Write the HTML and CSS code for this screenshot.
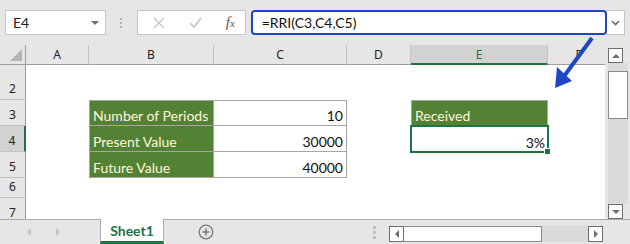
FILE: index.html
```html
<!DOCTYPE html>
<html>
  <head>
    <title>RRI</title>
    <link rel="stylesheet" href="styles.css">
  </head>
  <body>
    <div class="excel">
      <div class="formula-bar">
        <div class="name-box">
          <span>E4</span>
          <span class="caret"></span>
        </div>
        <div class="grip"><i></i><i></i><i></i></div>
        <div class="fx-box">
          <svg width="12" height="12" viewBox="0 0 12 12"><path d="M1 1L11 11M11 1L1 11" stroke="#c3c3c3" stroke-width="1.4" fill="none"/></svg>
          <svg width="13" height="11" viewBox="0 0 13 11"><path d="M1 6L5 10L12 1" stroke="#c3c3c3" stroke-width="1.6" fill="none"/></svg>
          <span class="fx">f<small>x</small></span>
        </div>
        <div class="formula-input">=RRI(C3,C4,C5)</div>
        <div class="expand">
          <svg width="9" height="6" viewBox="0 0 9 6"><path d="M1 1L4.5 4.5L8 1" stroke="#6a6a6a" stroke-width="1.6" fill="none"/></svg>
        </div>
      </div>

      <div class="sheet">
        <div class="grid">
          <div class="corner"><span class="tri"></span></div>
          <div class="col-head">A</div>
          <div class="col-head">B</div>
          <div class="col-head">C</div>
          <div class="col-head">D</div>
          <div class="col-head active">E</div>
          <div class="col-head">F</div>

          <div class="row-head">2</div>
          <div class="cell"></div><div class="cell"></div><div class="cell"></div><div class="cell"></div><div class="cell"></div><div class="cell"></div>

          <div class="row-head">3</div>
          <div class="cell"></div>
          <div class="cell label tl tt">Number of Periods</div>
          <div class="cell num tt">10</div>
          <div class="cell"></div>
          <div class="cell label tl tt">Received</div>
          <div class="cell"></div>

          <div class="row-head active">4</div>
          <div class="cell"></div>
          <div class="cell label tl">Present Value</div>
          <div class="cell num">30000</div>
          <div class="cell"></div>
          <div class="cell result selected">3%</div>
          <div class="cell"></div>

          <div class="row-head">5</div>
          <div class="cell"></div>
          <div class="cell label tl">Future Value</div>
          <div class="cell num">40000</div>
          <div class="cell"></div><div class="cell"></div><div class="cell"></div>

          <div class="row-head">6</div>
          <div class="cell"></div><div class="cell"></div><div class="cell"></div><div class="cell"></div><div class="cell"></div><div class="cell"></div>

          <div class="row-head">7</div>
          <div class="cell"></div><div class="cell"></div><div class="cell"></div><div class="cell"></div><div class="cell"></div><div class="cell"></div>
        </div>

        <div class="vscroll">
          <div class="sbtn"><span class="up"></span></div>
          <div class="vthumb"></div>
          <div class="vtrack"></div>
          <div class="sbtn"><span class="down"></span></div>
        </div>
      </div>

      <div class="tabs">
        <div class="tab-nav">
          <span class="nav-left"></span>
          <span class="nav-right"></span>
        </div>
        <div class="tab">Sheet1</div>
        <div class="add-sheet">
          <svg width="16" height="16" viewBox="0 0 16 16"><circle cx="8" cy="8" r="6.8" stroke="#7a7a7a" stroke-width="1.3" fill="none"/><path d="M8 4.5V11.5M4.5 8H11.5" stroke="#7a7a7a" stroke-width="1.5"/></svg>
        </div>
        <div class="grip tab-grip"><i></i><i></i><i></i></div>
        <div class="hscroll">
          <div class="sbtn"><span class="left"></span></div>
          <div class="hthumb"></div>
          <div class="htrack"></div>
          <div class="sbtn"><span class="right"></span></div>
        </div>
      </div>

      <svg class="arrow" width="630" height="244" viewBox="0 0 630 244">
        <path d="M592 38L562 79" stroke="#1f47c4" stroke-width="4" fill="none"/>
        <path d="M555 88L557 67L572 81Z" fill="#1f47c4"/>
      </svg>
    </div>
  </body>
</html>
```

FILE: styles.css
```css
body {
  margin: 0;
  background: #e6e6e6;
  font-family: "Liberation Sans", Arial, sans-serif;
}
.excel {
  position: relative;
  width: 630px;
  height: 244px;
  overflow: hidden;
  display: flex;
  flex-direction: column;
}

/* formula bar */
.formula-bar {
  height: 45px;
  box-sizing: border-box;
  padding: 10px 5px 10px 5px;
  display: flex;
  font-family: Lato, sans-serif;
  font-size: 14px;
}
.name-box {
  width: 101px;
  box-sizing: border-box;
  background: #fff;
  border: 1px solid #c6c6c6;
  display: flex;
  align-items: center;
  justify-content: space-between;
  padding: 0 6px 0 7px;
  color: #222;
}
.caret {
  width: 0;
  height: 0;
  border-left: 4px solid transparent;
  border-right: 4px solid transparent;
  border-top: 4px solid #707070;
}
.grip {
  width: 31px;
  display: flex;
  flex-direction: column;
  align-items: center;
  justify-content: center;
  gap: 2px;
}
.grip i {
  width: 2px;
  height: 2px;
  background: #b0b0b0;
}
.fx-box {
  width: 109px;
  box-sizing: border-box;
  background: #fff;
  border: 1px solid #c6c6c6;
  display: flex;
  align-items: center;
  padding-left: 15px;
}
.fx-box svg:nth-child(2) {
  margin-left: 24px;
}
.fx {
  margin-left: 24px;
  font-family: "Liberation Serif", serif;
  font-style: italic;
  font-size: 15px;
  color: #555;
}
.fx small {
  font-size: 11px;
}
.formula-input {
  margin-left: 5px;
  width: 357px;
  box-sizing: border-box;
  background: #fff;
  border: 2px solid #1f47c4;
  border-radius: 4px;
  padding-left: 9px;
  display: flex;
  align-items: center;
  color: #111;
}
.expand {
  width: 17px;
  background: #fff;
  border: 1px solid #c6c6c6;
  border-left: none;
  display: flex;
  align-items: center;
  justify-content: center;
}

/* sheet */
.sheet {
  height: 174px;
  display: flex;
}
.grid {
  width: 610px;
  height: 174px;
  overflow: hidden;
  display: grid;
  grid-template-columns: 26px 63px 125px 133px 64px 137px 62px;
  grid-template-rows: 20px 35px 26px 26px 26px 20px 26px;
  background: #fff;
  font-family: Lato, sans-serif;
  font-size: 14px;
}
.corner {
  background: #e6e6e6;
  border-right: 1px solid #9e9e9e;
  border-bottom: 1px solid #9e9e9e;
  position: relative;
}
.tri {
  position: absolute;
  right: 3px;
  bottom: 3px;
  width: 0;
  height: 0;
  border-left: 12px solid transparent;
  border-bottom: 12px solid #b5b5b5;
}
.col-head {
  background: #e6e6e6;
  border-right: 1px solid #c3c3c3;
  border-bottom: 1px solid #9e9e9e;
  display: flex;
  align-items: center;
  justify-content: center;
  font-family: "Noto Sans", sans-serif;
  font-size: 12px;
  color: #222;
}
.col-head:last-child {
  border-right: 1px solid #9e9e9e;
}
.col-head.active {
  background: #d2d2d2;
  border-bottom: 2px solid #217346;
  color: #217346;
}
.row-head {
  background: #e6e6e6;
  border-right: 1px solid #9e9e9e;
  border-bottom: 1px solid #c3c3c3;
  display: flex;
  align-items: flex-end;
  justify-content: center;
  padding-bottom: 2px;
  font-family: "Noto Sans", sans-serif;
  font-size: 12px;
  color: #222;
}
.row-head.active {
  background: #d2d2d2;
  border-right: 2px solid #217346;
}
.cell {
  display: flex;
  align-items: flex-end;
  padding: 0 3px 1px 3px;
  white-space: nowrap;
}
.grid > .cell:nth-child(7n) {
  border-right: 1px solid #9e9e9e;
}
.label {
  background: #548235;
  color: #fff6d8;
  border-right: 1px solid #a6a6a6;
  border-bottom: 1px solid #a6a6a6;
}
.num {
  justify-content: flex-end;
  color: #111;
  border-right: 1px solid #a6a6a6;
  border-bottom: 1px solid #a6a6a6;
}
.tl {
  border-left: 1px solid #a6a6a6;
}
.tt {
  border-top: 1px solid #a6a6a6;
}
.result {
  justify-content: flex-end;
  color: #111;
}
.selected {
  position: relative;
}
.selected::before {
  content: "";
  position: absolute;
  left: -1px;
  top: -1px;
  right: -1px;
  bottom: -1px;
  border: 2px solid #217346;
}
.selected::after {
  content: "";
  position: absolute;
  right: -3px;
  bottom: -3px;
  width: 5px;
  height: 5px;
  background: #217346;
  border: 1px solid #fff;
}

/* scrollbars */
.vscroll {
  width: 20px;
  display: flex;
  flex-direction: column;
  padding: 3px 2px 0 3px;
}
.sbtn {
  width: 15px;
  height: 15px;
  box-sizing: border-box;
  background: #fff;
  border: 1px solid #6e6e6e;
  display: flex;
  align-items: center;
  justify-content: center;
}
.up, .down, .left, .right {
  width: 0;
  height: 0;
}
.up {
  border-left: 4px solid transparent;
  border-right: 4px solid transparent;
  border-bottom: 4px solid #6e6e6e;
}
.down {
  border-left: 4px solid transparent;
  border-right: 4px solid transparent;
  border-top: 4px solid #6e6e6e;
}
.left {
  border-top: 4px solid transparent;
  border-bottom: 4px solid transparent;
  border-right: 4px solid #6e6e6e;
}
.right {
  border-top: 4px solid transparent;
  border-bottom: 4px solid transparent;
  border-left: 4px solid #6e6e6e;
}
.vthumb {
  margin-top: 8px;
  height: 48px;
  box-sizing: border-box;
  background: #fff;
  border: 1px solid #8a8a8a;
}
.vtrack {
  flex: 1;
  background: #dadada;
}
.vscroll .sbtn:first-child + .vthumb {
  box-shadow: 0 -8px 0 #dadada;
}

/* sheet tabs */
.tabs {
  flex: 1;
  display: flex;
  border-top: 1px solid #ababab;
}
.tab-nav {
  width: 100px;
  display: flex;
  align-items: center;
  padding-left: 27px;
  box-sizing: border-box;
  gap: 25px;
}
.nav-left {
  border-top: 4px solid transparent;
  border-bottom: 4px solid transparent;
  border-right: 4px solid #c8c8c8;
}
.nav-right {
  border-top: 4px solid transparent;
  border-bottom: 4px solid transparent;
  border-left: 4px solid #c8c8c8;
}
.tab {
  width: 64px;
  box-sizing: border-box;
  margin-top: -1px;
  background: #fff;
  border-left: 1px solid #ababab;
  border-right: 1px solid #ababab;
  border-bottom: 3px solid #217346;
  display: flex;
  align-items: center;
  justify-content: center;
  padding-top: 1px;
  font-family: Lato, sans-serif;
  font-weight: bold;
  font-size: 14px;
  color: #217346;
}
.add-sheet {
  margin-left: 34px;
  display: flex;
  align-items: center;
}
.tab-grip {
  margin-left: 159px;
  width: 3px;
  gap: 2px;
}
.tab-grip i {
  width: 3px;
  height: 3px;
  background: #c0c0c0;
}
.hscroll {
  margin-left: 13px;
  width: 214px;
  height: 16px;
  margin-top: 6px;
  display: flex;
}
.hscroll .sbtn {
  width: 15px;
  height: 16px;
}
.hthumb {
  width: 138px;
  box-sizing: border-box;
  background: #fff;
  border: 1px solid #8a8a8a;
  border-left: none;
}
.htrack {
  flex: 1;
  background: #dadada;
}

.arrow {
  position: absolute;
  left: 0;
  top: 0;
  pointer-events: none;
}
```
